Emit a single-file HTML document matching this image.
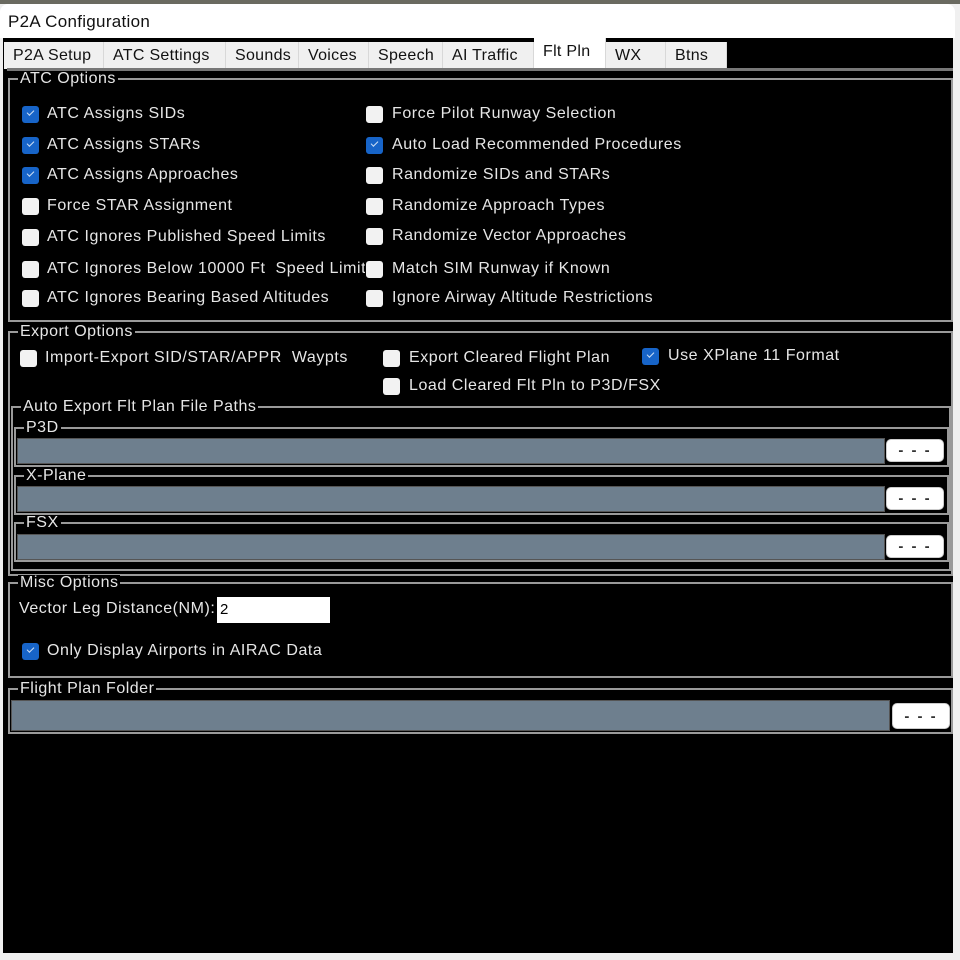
<!DOCTYPE html>
<html><head><meta charset="utf-8"><style>
*{margin:0;padding:0;box-sizing:border-box}
body{width:960px;height:960px;background:#f0f0f0;position:relative;overflow:hidden;font-family:"Liberation Sans","Noto Sans CJK JP",sans-serif}
.a{position:absolute}
.t{position:absolute;color:#e6e6e6;font-size:16px;letter-spacing:0.55px;white-space:nowrap;line-height:18px;margin-top:1px}
.g{position:absolute;border:2px solid #9a9a9a}
.lg{position:absolute;background:#000;color:#e6e6e6;font-size:16px;letter-spacing:0.5px;line-height:16px;padding:0 2px;white-space:nowrap;margin-top:1px}
.cb{position:absolute;width:17px;height:17px;border-radius:3px;background:#f2f2f2;margin-top:1px}
.cb.on{background:#1764c8}
.cb.on::after{content:"";position:absolute;left:5px;top:4px;width:6px;height:3px;border-left:1.5px solid #cfe0f5;border-bottom:1.5px solid #cfe0f5;transform:rotate(-45deg)}
.fld{position:absolute;background:#6e7f8e;border:1px solid #555}
.btn{position:absolute;background:#fff;border-radius:5px;border:1px solid #ccc;color:#333;font-size:15px;text-align:center;line-height:22px;letter-spacing:2px;font-weight:bold}
.tab{position:absolute;top:42px;height:27px;background:#f0f0f0;border-right:1px solid #d8d8d8;color:#111;font-size:16px;line-height:28px;padding-left:9px;letter-spacing:0.3px}
</style></head><body>
<div class="a" style="left:0;top:0;width:960px;height:4px;background:#6a6a60"></div>
<div class="a" style="left:0;top:4px;width:958px;height:956px;background:#f0f0f0;border-radius:8px 8px 0 0"></div>
<div class="a" style="left:0;top:4px;width:955px;height:34px;background:#fff;border-radius:8px 8px 0 0"></div>
<div class="a" style="left:8px;top:12px;font-size:17px;color:#111;letter-spacing:0.3px">P2A Configuration</div>
<div class="a" style="left:3px;top:38px;width:950px;height:915px;background:#000"></div>
<div class="tab" style="left:4px;width:100px">P2A Setup</div>
<div class="tab" style="left:104px;width:122px">ATC Settings</div>
<div class="tab" style="left:226px;width:73px">Sounds</div>
<div class="tab" style="left:299px;width:70px">Voices</div>
<div class="tab" style="left:369px;width:74px">Speech</div>
<div class="tab" style="left:443px;width:91px">AI Traffic</div>
<div class="tab" style="left:534px;top:38px;height:30px;width:72px;background:#fff;line-height:28px">Flt Pln</div>
<div class="tab" style="left:606px;width:60px">WX</div>
<div class="tab" style="left:666px;width:61px">Btns</div>
<div class="a" style="left:7px;top:68px;width:946px;height:3px;background:#777"></div>

<!-- ATC Options -->
<div class="g" style="left:8px;top:78px;width:945px;height:244px"></div>
<div class="lg" style="left:18px;top:70px">ATC Options</div>
<div class="cb on" style="left:22px;top:105px"></div><div class="t" style="left:47px;top:104px">ATC Assigns SIDs</div>
<div class="cb on" style="left:22px;top:136px"></div><div class="t" style="left:47px;top:135px">ATC Assigns STARs</div>
<div class="cb on" style="left:22px;top:166px"></div><div class="t" style="left:47px;top:165px">ATC Assigns Approaches</div>
<div class="cb" style="left:22px;top:197px"></div><div class="t" style="left:47px;top:196px">Force STAR Assignment</div>
<div class="cb" style="left:22px;top:228px"></div><div class="t" style="left:47px;top:227px">ATC Ignores Published Speed Limits</div>
<div class="cb" style="left:22px;top:260px"></div><div class="t" style="left:47px;top:259px;width:318px;overflow:hidden">ATC Ignores Below 10000 Ft&nbsp; Speed Limits</div>
<div class="cb" style="left:22px;top:289px"></div><div class="t" style="left:47px;top:288px">ATC Ignores Bearing Based Altitudes</div>
<div class="cb" style="left:366px;top:105px"></div><div class="t" style="left:392px;top:104px">Force Pilot Runway Selection</div>
<div class="cb on" style="left:366px;top:136px"></div><div class="t" style="left:392px;top:135px">Auto Load Recommended Procedures</div>
<div class="cb" style="left:366px;top:166px"></div><div class="t" style="left:392px;top:165px">Randomize SIDs and STARs</div>
<div class="cb" style="left:366px;top:197px"></div><div class="t" style="left:392px;top:196px">Randomize Approach Types</div>
<div class="cb" style="left:366px;top:227px"></div><div class="t" style="left:392px;top:226px">Randomize Vector Approaches</div>
<div class="cb" style="left:366px;top:260px"></div><div class="t" style="left:392px;top:259px">Match SIM Runway if Known</div>
<div class="cb" style="left:366px;top:289px"></div><div class="t" style="left:392px;top:288px">Ignore Airway Altitude Restrictions</div>

<!-- Export Options -->
<div class="g" style="left:8px;top:331px;width:945px;height:245px"></div>
<div class="lg" style="left:18px;top:323px">Export Options</div>
<div class="cb" style="left:20px;top:349px"></div><div class="t" style="left:45px;top:348px">Import-Export SID/STAR/APPR&nbsp; Waypts</div>
<div class="cb" style="left:383px;top:349px"></div><div class="t" style="left:409px;top:348px">Export Cleared Flight Plan</div>
<div class="cb" style="left:383px;top:377px"></div><div class="t" style="left:409px;top:376px">Load Cleared Flt Pln to P3D/FSX</div>
<div class="cb on" style="left:642px;top:347px"></div><div class="t" style="left:668px;top:346px">Use XPlane 11 Format</div>

<div class="g" style="left:11px;top:406px;width:940px;height:165px"></div>
<div class="lg" style="left:21px;top:398px">Auto Export Flt Plan File Paths</div>

<div class="g" style="left:14px;top:427px;width:935px;height:40px"></div>
<div class="lg" style="left:24px;top:419px">P3D</div>
<div class="fld" style="left:17px;top:438px;width:868px;height:26px"></div>
<div class="btn" style="left:886px;top:439px;width:58px;height:23px">- - -</div>

<div class="g" style="left:14px;top:475px;width:935px;height:40px"></div>
<div class="lg" style="left:24px;top:467px">X-Plane</div>
<div class="fld" style="left:17px;top:486px;width:868px;height:26px"></div>
<div class="btn" style="left:886px;top:487px;width:58px;height:23px">- - -</div>

<div class="g" style="left:14px;top:522px;width:935px;height:40px"></div>
<div class="lg" style="left:24px;top:514px">FSX</div>
<div class="fld" style="left:17px;top:534px;width:868px;height:26px"></div>
<div class="btn" style="left:886px;top:535px;width:58px;height:23px">- - -</div>

<!-- Misc -->
<div class="g" style="left:8px;top:582px;width:945px;height:96px"></div>
<div class="lg" style="left:18px;top:574px">Misc Options</div>
<div class="t" style="left:19px;top:599px">Vector Leg Distance(NM):</div>
<div class="a" style="left:217px;top:597px;width:113px;height:26px;background:#fff;color:#000;font-size:15px;padding:4px 3px">2</div>
<div class="cb on" style="left:22px;top:642px"></div><div class="t" style="left:47px;top:641px">Only Display Airports in AIRAC Data</div>

<!-- Flight Plan Folder -->
<div class="g" style="left:8px;top:688px;width:945px;height:46px"></div>
<div class="lg" style="left:18px;top:680px">Flight Plan Folder</div>
<div class="fld" style="left:11px;top:700px;width:879px;height:31px"></div>
<div class="btn" style="left:892px;top:703px;width:58px;height:26px;line-height:25px">- - -</div>
</body></html>
